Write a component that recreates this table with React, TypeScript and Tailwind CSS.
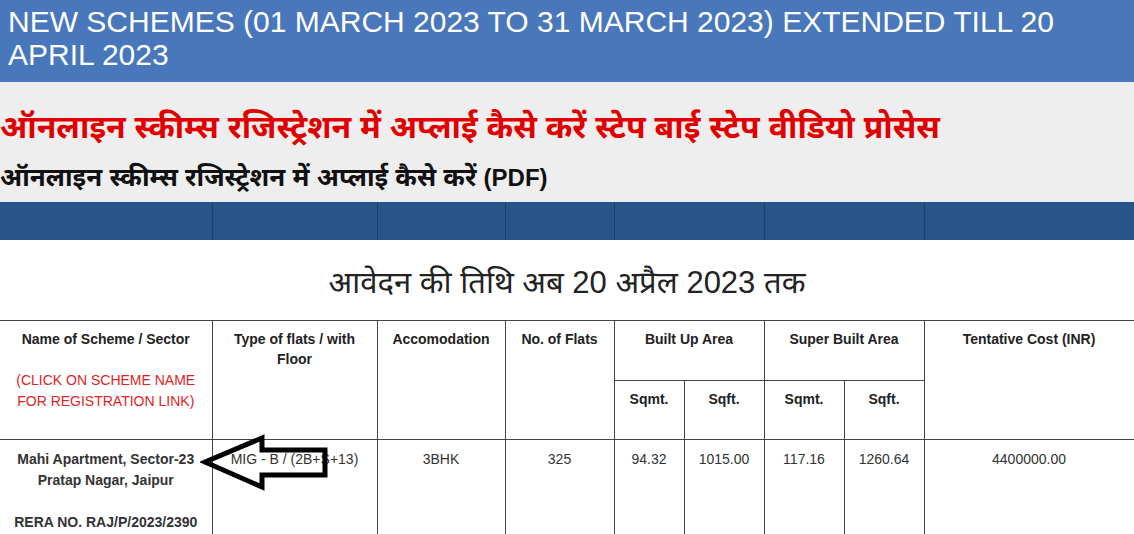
const hindi = "font-['Liberation_Sans','Noto_Sans_Devanagari','Lohit_Devanagari','Mangal',sans-serif]";

const bandCols = [212, 165, 128, 109, 150, 160, 210];

export default function App() {
  return (
    <main className="min-h-screen w-[1134px] overflow-hidden bg-white font-['Liberation_Sans',Arial,sans-serif] text-[#222]">
      <header className="h-[82px] bg-[#4877bc] px-2 pt-[5px]">
        <h1 className="text-[30px] leading-[33px] text-white">
          NEW SCHEMES (01 MARCH 2023 TO 31 MARCH 2023) EXTENDED TILL 20 APRIL 2023
        </h1>
      </header>

      <section className="h-[120px] bg-[#efeeee] pt-[26px]">
        <h2 className={`${hindi} text-[32px] font-bold leading-[38px] text-[#e00000]`}>
          ऑनलाइन स्कीम्स रजिस्ट्रेशन में अप्लाई कैसे करें स्टेप बाई स्टेप वीडियो प्रोसेस
        </h2>
        <h3 className={`${hindi} mt-[15px] text-[26px] font-bold leading-[32px] text-[#111]`}>
          ऑनलाइन स्कीम्स रजिस्ट्रेशन में अप्लाई कैसे करें <span className="text-[24px]">(PDF)</span>
        </h3>
      </section>

      <div className="flex h-[38px] bg-[#285589]">
        {bandCols.map((w, i) => (
          <div
            key={i}
            style={{ width: w }}
            className={i === 0 ? "h-full" : "h-full border-l border-[#1e3f68]"}
          />
        ))}
      </div>

      <div className="flex h-[80px] items-center justify-center pt-[6px]">
        <p className={`${hindi} text-[31px] leading-[40px] text-[#222]`}>
          आवेदन की तिथि अब 20 अप्रैल 2023 तक
        </p>
      </div>

      <SchemeTable />
    </main>
  );
}

function SchemeTable() {
  const th = "border border-[#444] px-2 pt-[8px] align-top text-[14px] font-bold leading-[20px] text-[#222]";
  const td = "border border-[#444] px-2 pt-[9px] align-top text-[14px] leading-[21px] text-[#333]";

  return (
    <div className="relative">
      <table className="w-[1134px] table-fixed border-collapse text-center">
        <colgroup>
          <col className="w-[212px]" />
          <col className="w-[165px]" />
          <col className="w-[128px]" />
          <col className="w-[109px]" />
          <col className="w-[70px]" />
          <col className="w-[80px]" />
          <col className="w-[80px]" />
          <col className="w-[80px]" />
          <col className="w-[210px]" />
        </colgroup>
        <thead>
          <tr className="h-[60px]">
            <th rowSpan={2} className={`${th} border-l-0`}>
              Name of Scheme / Sector
              <div className="mt-[21px] leading-[21px] font-normal text-[#e02424]">
                (CLICK ON SCHEME NAME FOR REGISTRATION LINK)
              </div>
            </th>
            <th rowSpan={2} className={th}>Type of flats / with Floor</th>
            <th rowSpan={2} className={th}>Accomodation</th>
            <th rowSpan={2} className={th}>No. of Flats</th>
            <th colSpan={2} className={th}>Built Up Area</th>
            <th colSpan={2} className={th}>Super Built Area</th>
            <th rowSpan={2} className={th}>Tentative Cost (INR)</th>
          </tr>
          <tr className="h-[59px]">
            <th className={th}>Sqmt.</th>
            <th className={th}>Sqft.</th>
            <th className={th}>Sqmt.</th>
            <th className={th}>Sqft.</th>
          </tr>
        </thead>
        <tbody>
          <tr className="h-[100px]">
            <td className={`${td} border-l-0 font-bold text-[#111]`}>
              Mahi Apartment, Sector-23 Pratap Nagar, Jaipur
              <div className="mt-[21px]">RERA NO. RAJ/P/2023/2390</div>
            </td>
            <td className={td}>MIG - B / (2B+S+13)</td>
            <td className={td}>3BHK</td>
            <td className={td}>325</td>
            <td className={td}>94.32</td>
            <td className={td}>1015.00</td>
            <td className={td}>117.16</td>
            <td className={td}>1260.64</td>
            <td className={td}>4400000.00</td>
          </tr>
        </tbody>
      </table>

      {/* hand-drawn pointer over the scheme name */}
      <svg
        className="pointer-events-none absolute left-[200px] top-[113px]"
        width="132"
        height="60"
        viewBox="0 0 132 60"
        fill="none"
      >
        <polygon
          points="5,29 62,5 62,17 125,17 125,42 62,42 62,54"
          stroke="#000"
          strokeWidth="5"
          strokeLinejoin="miter"
        />
      </svg>
    </div>
  );
}
